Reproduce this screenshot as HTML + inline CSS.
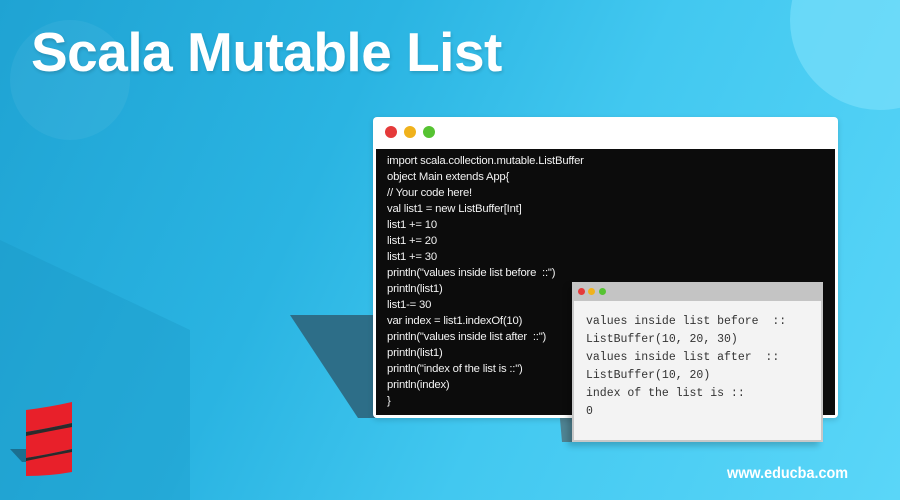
<!DOCTYPE html>
<html><head><style>
html,body{margin:0;padding:0}
body{width:900px;height:500px;overflow:hidden;position:relative;font-family:"Liberation Sans",sans-serif;
background:linear-gradient(115deg,#1fa3d3 0%,#2ab4e2 35%,#42c8f0 60%,#5ad6f8 100%);}
.title{position:absolute;left:31px;top:20px;font-size:55px;font-weight:bold;color:#fff;letter-spacing:-0.5px;text-shadow:1px 2px 3px rgba(0,0,0,.15);white-space:nowrap}
.win{position:absolute;left:373px;top:117px;width:465px;height:301px;background:#fff;border-radius:4px;box-shadow:0 2px 6px rgba(0,0,0,.15)}
.dot{position:absolute;width:12px;height:12px;border-radius:50%;top:9px}
.code{position:absolute;left:3px;top:32px;width:459px;height:266px;background:#0c0c0c;color:#f2f2f2;font-size:11.3px;line-height:16px;padding:4px 0 0 11px;box-sizing:border-box;letter-spacing:-0.2px}
.out{position:absolute;left:572px;top:282px;width:251px;height:160px;background:#f3f3f3;border:2px solid #c8c8c8;border-top:none;box-sizing:border-box;box-shadow:-4px 4px 6px rgba(0,0,0,.2)}
.ohead{height:19px;background:#c4c4c4;border-radius:3px 3px 0 0;margin:0 -2px;position:relative}
.sd{position:absolute;width:7px;height:7px;border-radius:50%;top:6px}
.otxt{position:absolute;left:12px;top:31px;font-family:"Liberation Mono",monospace;font-size:11.5px;line-height:18px;color:#333;white-space:pre}
.url{position:absolute;left:727px;top:465px;color:#fff;font-weight:bold;font-size:16px;transform:scaleX(.9);transform-origin:left top}
</style></head><body>
<svg style="position:absolute;left:0;top:0" width="900" height="500">
<circle cx="880" cy="20" r="90" fill="#7fe1fb" opacity=".6"/>
<circle cx="70" cy="80" r="60" fill="#fff" opacity=".05"/>
<polygon points="0,240 190,330 190,500 0,500" fill="#1a95c4" opacity=".35"/>
<polygon points="290,315 375,315 375,418 358,418" fill="#2d6e88"/>
<polygon points="556,373 572,373 572,442 562,442" fill="#555" opacity=".6"/>
<g>
<polygon points="10,449 30,449 30,462 22,462" fill="#1b6f90"/>
<path d="M26,410 Q50,407 72,402 L72,423 Q50,428 26,432 Z" fill="#e8202a"/>
<path d="M26,432 Q50,428 72,423 L72,430 Q50,434 26,438 Z" fill="#2b2b2b"/>
<path d="M26,436 Q50,431 72,427 L72,449 Q50,454 26,458 Z" fill="#e8202a"/>
<path d="M26,458 Q50,454 72,449 L72,455 Q50,459 26,462 Z" fill="#2b2b2b"/>
<path d="M26,461 Q50,456 72,452 L72,472 Q50,476 26,476 Z" fill="#e8202a"/>
</g>
</svg>
<div class="title">Scala Mutable List</div>
<div class="win">
<div class="dot" style="left:12px;background:#e53a3a"></div>
<div class="dot" style="left:31px;background:#f0b21c"></div>
<div class="dot" style="left:50px;background:#56c332"></div>
<div class="code">import scala.collection.mutable.ListBuffer<br>object Main extends App{<br>// Your code here!<br>val list1 = new ListBuffer[Int]<br>list1 += 10<br>list1 += 20<br>list1 += 30<br>println("values inside list before &nbsp;::")<br>println(list1)<br>list1-= 30<br>var index = list1.indexOf(10)<br>println("values inside list after &nbsp;::")<br>println(list1)<br>println("index of the list is ::")<br>println(index)<br>}</div>
</div>
<div class="out">
<div class="ohead">
<div class="sd" style="left:6px;background:#e53a3a"></div>
<div class="sd" style="left:16px;background:#f0b21c"></div>
<div class="sd" style="left:27px;background:#56c332"></div>
</div>
<div class="otxt">values inside list before  ::
ListBuffer(10, 20, 30)
values inside list after  ::
ListBuffer(10, 20)
index of the list is ::
0</div>
</div>
<div class="url">www.educba.com</div>
</body></html>
